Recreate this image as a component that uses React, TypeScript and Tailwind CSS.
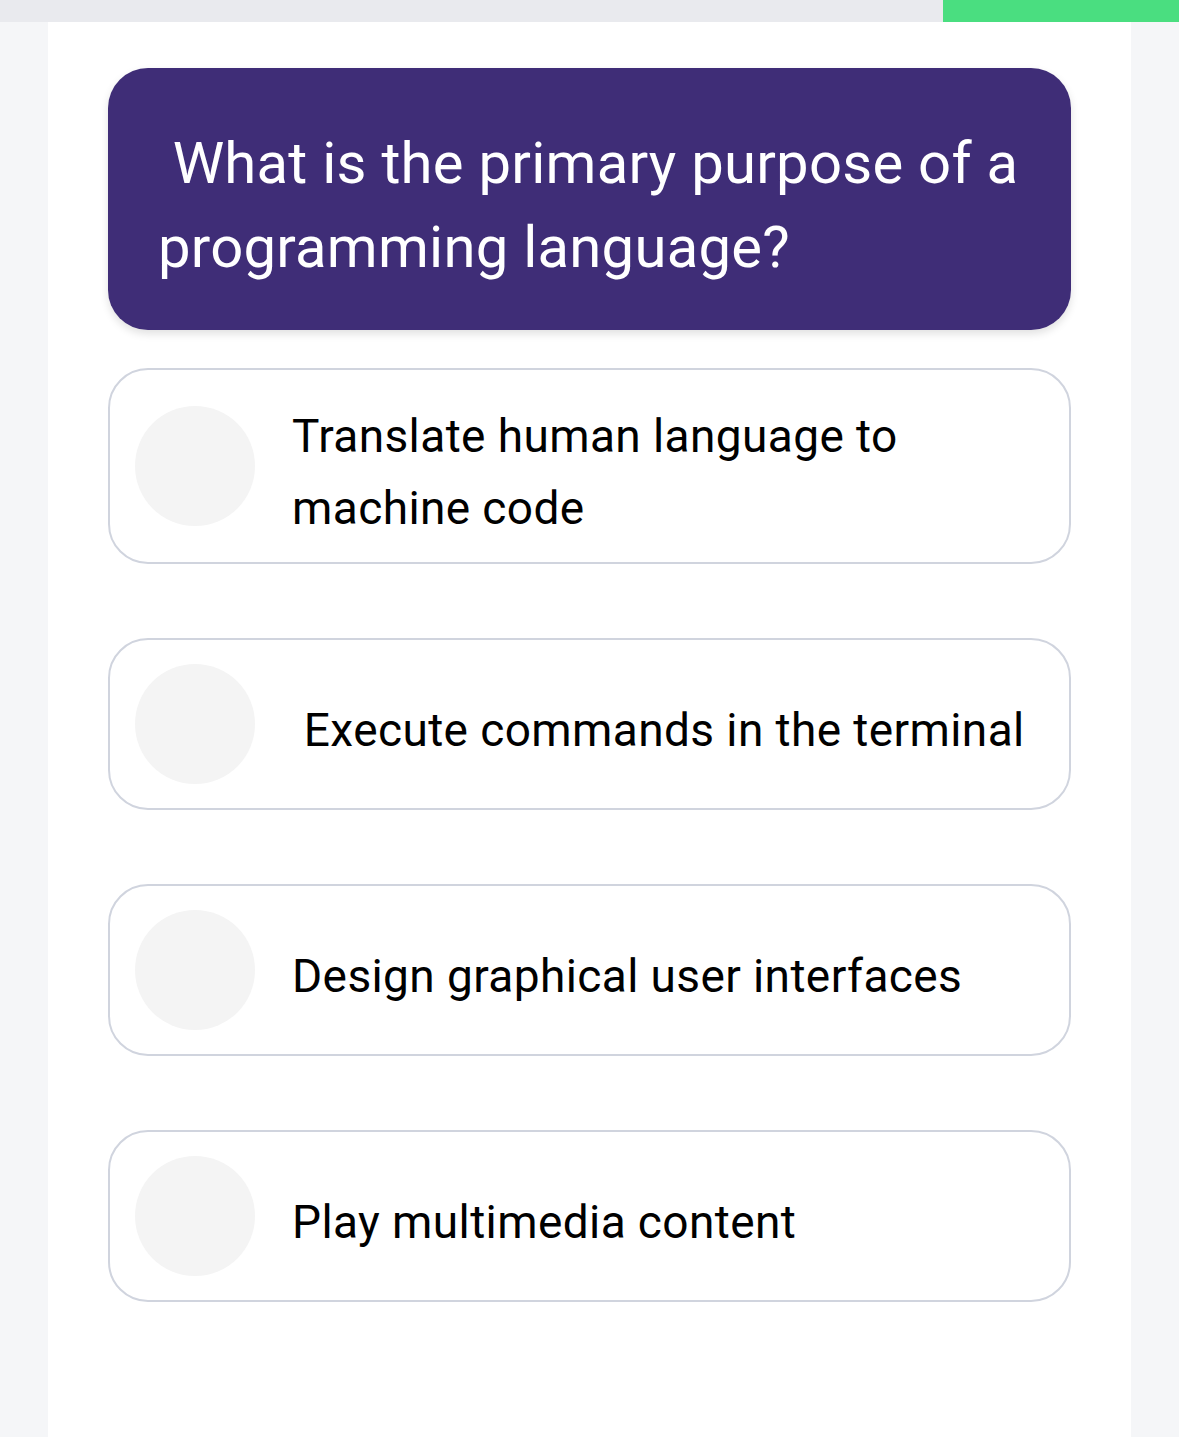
const options = [
  "Translate human language to machine code",
  " Execute commands in the terminal",
  "Design graphical user interfaces",
  "Play multimedia content",
];

function OptionRow({ label }: { label: string }) {
  return (
    <button
      type="button"
      className="flex w-full items-center gap-[37px] rounded-[40px] border-2 border-[#d0d4de] bg-white py-6 pl-[25px] pr-10 text-left"
    >
      <span className="h-[120px] w-[120px] shrink-0 rounded-full bg-[#f4f4f4]" />
      <span className="translate-y-[6px] whitespace-pre-wrap text-[46px] leading-[72px] tracking-[0.4px] text-black">
        {label}
      </span>
    </button>
  );
}

export default function App() {
  return (
    <div
      className="min-h-[1437px] bg-[#f5f6f8]"
      style={{ fontFamily: "Roboto, 'Noto Sans', sans-serif" }}
    >
      <div className="flex h-[22px] bg-[#e9eaee]">
        <div className="flex-1" />
        <div className="w-[236px] bg-[#4ade80]" />
      </div>
      <main className="mx-[48px] min-h-[1415px] bg-white px-[60px] pt-[46px]">
        <div className="rounded-[40px] bg-[#3f2d77] pb-[41px] pl-[50px] pr-[40px] pt-[53px] shadow-[0_4px_8px_rgba(0,0,0,0.12)]">
          <h1 className="whitespace-pre-wrap text-[58px] leading-[84px] tracking-[0.25px] text-white">
            {" What is the primary purpose of a programming language?"}
          </h1>
        </div>
        <div className="mt-[38px] flex flex-col gap-[74px]">
          {options.map((o) => (
            <OptionRow key={o} label={o} />
          ))}
        </div>
      </main>
    </div>
  );
}
